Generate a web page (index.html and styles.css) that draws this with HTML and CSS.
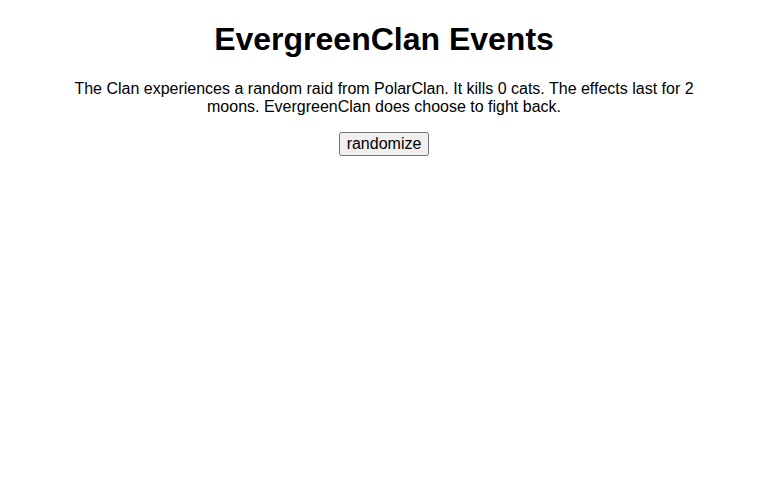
FILE: index.html
```html
<!DOCTYPE html>
<html lang="en">
<head>
  <meta charset="UTF-8" />
  <meta name="viewport" content="width=device-width, initial-scale=1.0"/>
  <title>EvergreenClan Events</title>
  <link rel="stylesheet" href="styles.css">
</head>
<body>
  <h1>EvergreenClan Events</h1>
  <p id="event">The Clan experiences a random raid from PolarClan. It kills 0 cats. The effects last for 2 moons. EvergreenClan does choose to fight back.</p>
  <button id="randomize">randomize</button>
</body>
</html>
```

FILE: styles.css
```css
body {
  font-family: 'Liberation Sans', Arial, sans-serif;
  text-align: center;
  color: #000;
  background: #fff;
  margin: 0 74px;
}

h1 {
  font-size: 32px;
}

p {
  font-size: 16px;
}

button {
  font-family: 'Liberation Sans', Arial, sans-serif;
  font-size: 16px;
}
```
